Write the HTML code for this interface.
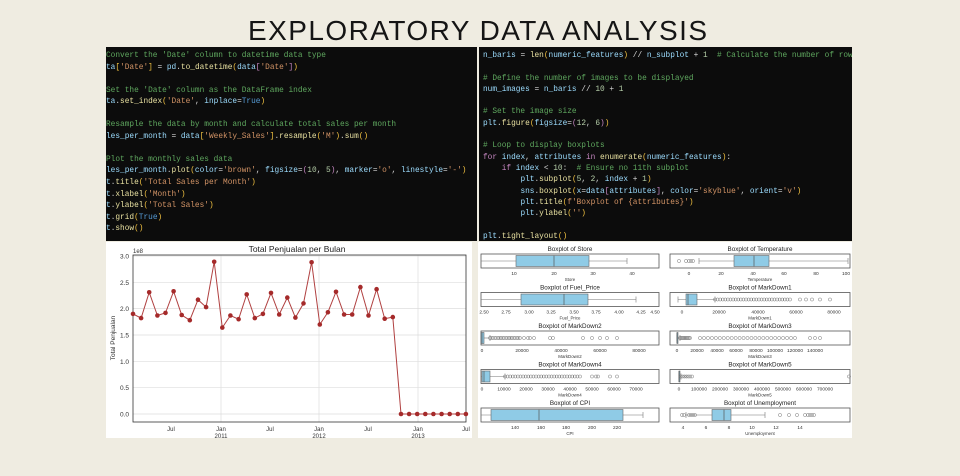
<!DOCTYPE html>
<html><head><meta charset="utf-8"><style>
body{margin:0;width:960px;height:476px;background:#efece1;overflow:hidden;position:relative;font-family:"Liberation Sans",sans-serif}
.code{position:absolute;background:#0c0c0c;top:47px;height:194px;font-family:"Liberation Mono",monospace;font-size:7.8px;line-height:11.55px;color:#d6d6d6;white-space:pre;overflow:hidden;padding-top:4px;box-sizing:border-box}
.c{color:#5fa85f}.s{color:#d39466}.f{color:#e8e0a0}.k{color:#c586c0}.n{color:#9cdcfe}.b{color:#569cd6}.p{color:#f0c040}.m{color:#b5cea8}
</style></head><body>
<svg style="position:absolute;left:0;top:0" width="960" height="48"><text x="248" y="40" textLength="459" font-size="28" font-family="Liberation Sans" fill="#151515">EXPLORATORY DATA ANALYSIS</text></svg>
<div class="code" style="left:106px;width:371px"><span class="c">Convert the 'Date' column to datetime data type</span>
<span class="n">ta</span><span class="p">[</span><span class="s">'Date'</span><span class="p">]</span> = <span class="n">pd</span>.<span class="f">to_datetime</span><span class="p">(</span><span class="n">data</span><span class="k">[</span><span class="s">'Date'</span><span class="k">]</span><span class="p">)</span>

<span class="c">Set the 'Date' column as the DataFrame index</span>
<span class="n">ta</span>.<span class="f">set_index</span><span class="p">(</span><span class="s">'Date'</span>, <span class="n">inplace</span>=<span class="b">True</span><span class="p">)</span>

<span class="c">Resample the data by month and calculate total sales per month</span>
<span class="n">les_per_month</span> = <span class="n">data</span><span class="p">[</span><span class="s">'Weekly_Sales'</span><span class="p">]</span>.<span class="f">resample</span><span class="p">(</span><span class="s">'M'</span><span class="p">)</span>.<span class="f">sum</span><span class="p">()</span>

<span class="c">Plot the monthly sales data</span>
<span class="n">les_per_month</span>.<span class="f">plot</span><span class="p">(</span><span class="n">color</span>=<span class="s">'brown'</span>, <span class="n">figsize</span>=<span class="k">(</span><span class="m">10</span>, <span class="m">5</span><span class="k">)</span>, <span class="n">marker</span>=<span class="s">'o'</span>, <span class="n">linestyle</span>=<span class="s">'-'</span><span class="p">)</span>
<span class="n">t</span>.<span class="f">title</span><span class="p">(</span><span class="s">'Total Sales per Month'</span><span class="p">)</span>
<span class="n">t</span>.<span class="f">xlabel</span><span class="p">(</span><span class="s">'Month'</span><span class="p">)</span>
<span class="n">t</span>.<span class="f">ylabel</span><span class="p">(</span><span class="s">'Total Sales'</span><span class="p">)</span>
<span class="n">t</span>.<span class="f">grid</span><span class="p">(</span><span class="b">True</span><span class="p">)</span>
<span class="n">t</span>.<span class="f">show</span><span class="p">()</span></div>
<div class="code" style="left:479px;width:373px;padding-left:4px;line-height:11.3px"><span class="n">n_baris</span> = <span class="f">len</span><span class="p">(</span><span class="n">numeric_features</span><span class="p">)</span> // <span class="n">n_subplot</span> + <span class="m">1</span>  <span class="c"># Calculate the number of rows</span>

<span class="c"># Define the number of images to be displayed</span>
<span class="n">num_images</span> = <span class="n">n_baris</span> // <span class="m">10</span> + <span class="m">1</span>

<span class="c"># Set the image size</span>
<span class="n">plt</span>.<span class="f">figure</span><span class="p">(</span><span class="n">figsize</span>=<span class="k">(</span><span class="m">12</span>, <span class="m">6</span><span class="k">)</span><span class="p">)</span>

<span class="c"># Loop to display boxplots</span>
<span class="k">for</span> <span class="n">index</span>, <span class="n">attributes</span> <span class="k">in</span> <span class="f">enumerate</span><span class="p">(</span><span class="n">numeric_features</span><span class="p">)</span>:
    <span class="k">if</span> <span class="n">index</span> &lt; <span class="m">10</span>:  <span class="c"># Ensure no 11th subplot</span>
        <span class="n">plt</span>.<span class="f">subplot</span><span class="p">(</span><span class="m">5</span>, <span class="m">2</span>, <span class="n">index</span> + <span class="m">1</span><span class="p">)</span>
        <span class="n">sns</span>.<span class="f">boxplot</span><span class="p">(</span><span class="n">x</span>=<span class="n">data</span><span class="k">[</span><span class="n">attributes</span><span class="k">]</span>, <span class="n">color</span>=<span class="s">'skyblue'</span>, <span class="n">orient</span>=<span class="s">'v'</span><span class="p">)</span>
        <span class="n">plt</span>.<span class="f">title</span><span class="p">(</span><span class="s">f'Boxplot of {attributes}'</span><span class="p">)</span>
        <span class="n">plt</span>.<span class="f">ylabel</span><span class="p">(</span><span class="s">''</span><span class="p">)</span>

<span class="n">plt</span>.<span class="f">tight_layout</span><span class="p">()</span></div>
<svg id="ch" style="position:absolute;left:0;top:0" width="960" height="476"></svg>
<script>
var s='';
s+='<rect x="106" y="242" width="366" height="196" fill="#fff"/>';
s+='<text x="297" y="252" font-size="8.5" text-anchor="middle" fill="#222">Total Penjualan per Bulan</text>';
var X0=133,X1=466,Y0=414,k=52.67;
for(var v=0;v<=3;v+=0.5){var y=Y0-v*k;s+='<line x1="'+X0+'" x2="'+X1+'" y1="'+y+'" y2="'+y+'" stroke="#ddd" stroke-width="0.7"/>';s+='<text x="129" y="'+(y+2.5)+'" font-size="6.5" text-anchor="end" fill="#333">'+v.toFixed(1)+'</text>';}
[221,319,418].forEach(function(x){s+='<line x1="'+x+'" x2="'+x+'" y1="255" y2="422" stroke="#ddd" stroke-width="0.7"/>';});
s+='<rect x="'+X0+'" y="255" width="'+(X1-X0)+'" height="167" fill="none" stroke="#333" stroke-width="0.8"/>';
s+='<text x="133" y="253" font-size="6" fill="#333">1e8</text>';
s+='<text x="115" y="338" font-size="6.5" fill="#333" text-anchor="middle" transform="rotate(-90 115 338)">Total Penjualan</text>';
var tk=[[171,'Jul'],[221,'Jan'],[270,'Jul'],[319,'Jan'],[368,'Jul'],[418,'Jan'],[466,'Jul']];
tk.forEach(function(t){s+='<text x="'+t[0]+'" y="431" font-size="6" text-anchor="middle" fill="#333">'+t[1]+'</text>';});
[[221,'2011'],[319,'2012'],[418,'2013']].forEach(function(t){s+='<text x="'+t[0]+'" y="438" font-size="6" text-anchor="middle" fill="#333">'+t[1]+'</text>';});
var d=[1.9,1.82,2.31,1.87,1.92,2.33,1.88,1.78,2.17,2.03,2.89,1.64,1.87,1.8,2.27,1.82,1.9,2.3,1.89,2.21,1.83,2.1,2.88,1.7,1.93,2.32,1.89,1.89,2.41,1.87,2.37,1.81,1.84,0,0,0,0,0,0,0,0,0];
var pts=d.map(function(v,i){return (X0+i*8.12).toFixed(1)+','+(Y0-v*k).toFixed(1)});
s+='<polyline points="'+pts.join(' ')+'" fill="none" stroke="#b04040" stroke-width="1"/>';
pts.forEach(function(p){var a=p.split(',');s+='<circle cx="'+a[0]+'" cy="'+a[1]+'" r="2.3" fill="#a52a2a"/>';});
s+='<rect x="478" y="242" width="374" height="196" fill="#fff"/>';
var bp=[
['Store','Store',481,659,[[514,'10'],[554,'20'],[593,'30'],[632,'40']],481,516,554,589,627,[]],
['Temperature','Temperature',670,850,[[689,'0'],[721,'20'],[753,'40'],[784,'60'],[816,'80'],[846,'100']],699,734,754,769,848,[679,686,689,691,693]],
['Fuel_Price','Fuel_Price',481,659,[[484,'2.50'],[506,'2.75'],[529,'3.00'],[551,'3.25'],[574,'3.50'],[596,'3.75'],[619,'4.00'],[641,'4.25'],[655,'4.50']],481,521,564,588,636,[]],
['MarkDown1','MarkDown1',670,850,[[682,'0'],[719,'20000'],[758,'40000'],[796,'60000'],[834,'80000']],678,686,688,697,715,'o1'],
['MarkDown2','MarkDown2',481,659,[[482,'0'],[522,'20000'],[561,'40000'],[600,'60000'],[639,'80000']],481,481,482,484,490,'o2'],
['MarkDown3','MarkDown3',670,850,[[677,'0'],[697,'20000'],[717,'40000'],[736,'60000'],[756,'80000'],[775,'100000'],[795,'120000'],[815,'140000']],677,677,677,678,680,'o3'],
['MarkDown4','MarkDown4',481,659,[[482,'0'],[504,'10000'],[526,'20000'],[548,'30000'],[570,'40000'],[592,'50000'],[614,'60000'],[636,'70000']],481,482,484,490,505,'o4'],
['MarkDown5','MarkDown5',670,850,[[679,'0'],[699,'100000'],[720,'200000'],[741,'300000'],[762,'400000'],[783,'500000'],[804,'600000'],[825,'700000']],679,679,679,680,681,'o5'],
['CPI','CPI',481,659,[[515,'140'],[541,'160'],[566,'180'],[592,'200'],[617,'220']],481,491,539,623,643,[]],
['Unemployment','Unemployment',670,850,[[683,'4'],[706,'6'],[729,'8'],[752,'10'],[776,'12'],[800,'14']],686,712,724,731,765,'o6']];
function rng(a,b,n){var r=[];for(var i=0;i<n;i++)r.push(a+(b-a)*i/(n-1));return r;}
var outs={o1:rng(715,790,30).concat([800,806,812,820,830]),o2:rng(490,520,20).concat([524,528,530,534,550,553,583,592,600,607,617]),o3:rng(680,690,10).concat(rng(700,795,25),[810,815,820]),o4:rng(505,580,30).concat([592,596,598,610,617]),o5:rng(681,690,6).concat([692,849]),o6:[682,684,689,691,693,695,780,789,797,805,808,810,812,814]};
bp.forEach(function(b,i){
 var row=Math.floor(i/2),oy=row*38.5,cy=261+oy,x0=b[2],x1=b[3];
 s+='<text x="'+((x0+x1)/2)+'" y="'+(251+oy)+'" font-size="6.3" text-anchor="middle" fill="#222">Boxplot of '+b[0]+'</text>';
 s+='<rect x="'+x0+'" y="'+(254+oy)+'" width="'+(x1-x0)+'" height="14" fill="none" stroke="#555" stroke-width="0.8"/>';
 s+='<line x1="'+b[5]+'" x2="'+b[9]+'" y1="'+cy+'" y2="'+cy+'" stroke="#777" stroke-width="0.6"/>';
 s+='<line x1="'+b[5]+'" x2="'+b[5]+'" y1="'+(cy-3)+'" y2="'+(cy+3)+'" stroke="#777" stroke-width="0.6"/>';
 s+='<line x1="'+b[9]+'" x2="'+b[9]+'" y1="'+(cy-3)+'" y2="'+(cy+3)+'" stroke="#777" stroke-width="0.6"/>';
 s+='<rect x="'+b[6]+'" y="'+(cy-5.5)+'" width="'+Math.max(1,b[8]-b[6])+'" height="11" fill="#8fcbe6" stroke="#666" stroke-width="0.6"/>';
 s+='<line x1="'+b[7]+'" x2="'+b[7]+'" y1="'+(cy-5.5)+'" y2="'+(cy+5.5)+'" stroke="#555" stroke-width="0.7"/>';
 var o=typeof b[10]=='string'?outs[b[10]]:b[10];
 o.forEach(function(x){s+='<circle cx="'+x+'" cy="'+cy+'" r="1.6" fill="none" stroke="#777" stroke-width="0.5"/>';});
 b[4].forEach(function(t){s+='<text x="'+t[0]+'" y="'+(275+oy)+'" font-size="4.8" text-anchor="middle" fill="#333">'+t[1]+'</text>';});
 s+='<text x="'+((x0+x1)/2)+'" y="'+(281+oy)+'" font-size="4.4" text-anchor="middle" fill="#333">'+b[1]+'</text>';
});
document.getElementById('ch').innerHTML=s;
</script>
</body></html>
